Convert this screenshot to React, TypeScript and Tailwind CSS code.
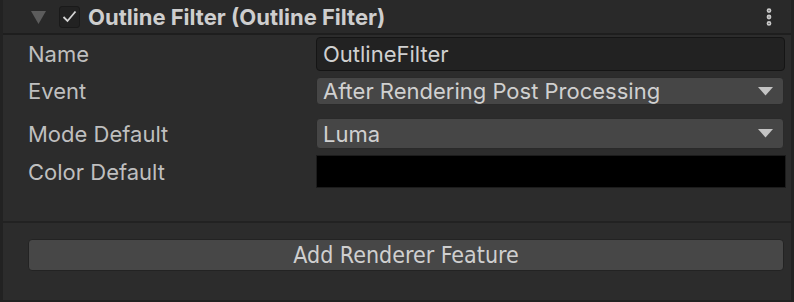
import { EllipsisVertical } from "lucide-react";

const font = { fontFamily: "Inter, 'Noto Sans', sans-serif" };

function Caret() {
  return (
    <svg width="15" height="9" viewBox="0 0 15 9" className="shrink-0">
      <polygon points="0,0 15,0 7.5,8.5" fill="#c4c4c4" />
    </svg>
  );
}

function Row({ label, children, className }: { label: string; children: React.ReactNode; className: string }) {
  return (
    <div className={`flex items-center ${className}`}>
      <div className="w-[313px] shrink-0 pl-[25px] text-[22px] leading-none text-[#bfbfbf]">{label}</div>
      {children}
    </div>
  );
}

export default function App() {
  return (
    <div className="h-[302px] w-[794px] bg-[#2c2c2c] text-[#c4c4c4]" style={font}>
      <div className="h-[223px] border-x-[3px] border-b-2 border-[#222222]">
        <div className="flex h-[35px] items-center border-b-2 border-[#1e1e1e] bg-[#292929] pl-[28px] pr-[11px]">
          <svg width="15" height="14" viewBox="0 0 15 14">
            <polygon points="0,1 15,1 7.5,14" fill="#5c5c5c" />
          </svg>
          <div className="ml-[13px] flex h-[22px] w-[21px] items-center justify-center rounded-[3px] border border-[#1a1a1a] bg-[#222222]">
            <svg width="15" height="13" viewBox="0 0 15 13">
              <path d="M1.5 7 L5.5 11 L13.5 1.5" stroke="#d4d4d4" strokeWidth="1.8" fill="none" />
            </svg>
          </div>
          <div className="ml-[8px] text-[22px] leading-none font-bold text-[#cecece]">Outline Filter (Outline Filter)</div>
          <EllipsisVertical size={22} strokeWidth={3.2} className="ml-auto text-[#c8c8c8]" />
        </div>

        <Row label="Name" className="mt-[2px] h-[34px]">
          <div className="flex h-[34px] w-[469px] items-center rounded-[4px] border border-[#151515] bg-[#222222] px-[6px] text-[22px] leading-none text-[#d0d0d0]">
            OutlineFilter
          </div>
        </Row>
        <Row label="Event" className="mt-[6px] h-[28px]">
          <div className="flex h-[28px] w-[468px] items-center justify-between rounded-[4px] border border-[#2a2a2a] bg-[#464646] pl-[6px] pr-[10px] text-[22px] leading-none text-[#d0d0d0]">
            After Rendering Post Processing
            <Caret />
          </div>
        </Row>
        <Row label="Mode Default" className="mt-[13px] h-[31px]">
          <div className="flex h-[31px] w-[468px] items-center justify-between rounded-[4px] border border-[#2a2a2a] bg-[#464646] pl-[6px] pr-[10px] text-[22px] leading-none text-[#d0d0d0]">
            Luma
            <Caret />
          </div>
        </Row>
        <Row label="Color Default" className="mt-[6px] h-[33px]">
          <div className="h-[33px] w-[470px] border border-[#1c1c1c] bg-black" />
        </Row>
      </div>

      <div className="h-[79px] border-x-[3px] border-b-[2px] border-[#222222] pl-[25px] pr-[7px] pt-[16px]">
        <div
          className="flex h-[32px] items-center justify-center rounded-[4px] border border-[#232323] bg-[#474747] text-[23px] leading-none text-[#cfcfcf]"
          style={{ fontFamily: "'DejaVu Sans Condensed', 'Liberation Sans', sans-serif" }}
        >
          Add Renderer Feature
        </div>
      </div>
    </div>
  );
}
